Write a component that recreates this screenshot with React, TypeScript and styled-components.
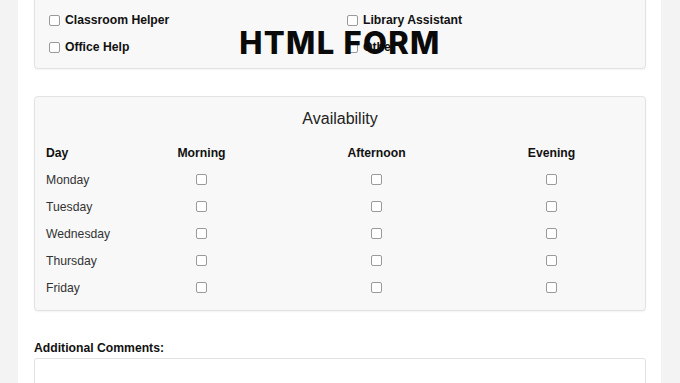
import React from "react";
import styled, { createGlobalStyle } from "styled-components";

const GlobalStyle = createGlobalStyle`
  html, body {
    margin: 0;
    padding: 0;
    background: #f3f3f3;
    overflow: hidden;
    font-family: "Liberation Sans", Arial, sans-serif;
  }
`;

const Viewport = styled.div`
  position: relative;
  width: 680px;
  height: 383px;
  overflow: hidden;
`;

const Page = styled.div`
  margin: -15px 0 0 18px;
  width: 643px;
  background: #ffffff;
  padding: 0 15px 40px 16px;
  box-sizing: border-box;
  min-height: 420px;
`;

const Panel = styled.div`
  background: #f8f8f8;
  border: 1px solid #e2e2e2;
  border-radius: 4px;
  box-shadow: 0 1px 2px rgba(0, 0, 0, 0.05);
`;

const RolePanel = styled(Panel)`
  display: grid;
  grid-template-columns: 298px 1fr;
  row-gap: 11px;
  padding: 26px 14px 13px;
`;

const RoleOption = styled.label`
  display: flex;
  align-items: center;
  gap: 5px;
  font-size: 12.2px;
  font-weight: bold;
  color: #111;
  line-height: 16px;
`;

const Box = styled.input.attrs({ type: "checkbox" })`
  appearance: none;
  margin: 0;
  width: 11px;
  height: 11px;
  border: 1px solid #9a9a9a;
  border-radius: 2px;
  background: #fff;
  flex: none;
`;

const AvailabilityPanel = styled(Panel)`
  margin-top: 27px;
  padding: 12px 11px 9px;
`;

const PanelTitle = styled.h3`
  margin: 0 0 10px;
  text-align: center;
  font-size: 16px;
  font-weight: normal;
  color: #222;
  line-height: 20px;
`;

const Grid = styled.div`
  display: grid;
  grid-template-columns: 68px repeat(3, 175px);
  grid-auto-rows: 27px;
  align-items: center;
`;

const HeadCell = styled.div<{ $center?: boolean }>`
  font-size: 12.2px;
  font-weight: bold;
  color: #111;
  text-align: ${(p) => (p.$center ? "center" : "left")};
`;

const DayCell = styled.div`
  font-size: 12.2px;
  color: #333;
`;

const BoxCell = styled.div`
  display: flex;
  justify-content: center;
`;

const CommentsLabel = styled.div`
  margin-top: 29px;
  font-size: 12.2px;
  font-weight: bold;
  color: #111;
  line-height: 16px;
`;

const CommentsArea = styled.div`
  margin-top: 2px;
  height: 60px;
  background: #fff;
  border: 1px solid #e2e2e2;
  border-radius: 3px;
`;

const Overlay = styled.div`
  position: absolute;
  top: 26px;
  left: 0;
  right: 0;
  text-align: center;
  font-family: Inter, "Open Sans", sans-serif;
  font-weight: 800;
  font-size: 31px;
  letter-spacing: 1.3px;
  color: #0a0a0a;
  line-height: 34px;
  pointer-events: none;
`;

const days = ["Monday", "Tuesday", "Wednesday", "Thursday", "Friday"];
const slots = ["Morning", "Afternoon", "Evening"];

export default function App() {
  return (
    <Viewport>
      <GlobalStyle />
      <Page>
        <RolePanel>
          <RoleOption><Box />Classroom Helper</RoleOption>
          <RoleOption><Box />Library Assistant</RoleOption>
          <RoleOption><Box />Office Help</RoleOption>
          <RoleOption><Box />Other</RoleOption>
        </RolePanel>

        <AvailabilityPanel>
          <PanelTitle>Availability</PanelTitle>
          <Grid>
            <HeadCell>Day</HeadCell>
            {slots.map((s) => (
              <HeadCell key={s} $center>{s}</HeadCell>
            ))}
            {days.map((d) => (
              <React.Fragment key={d}>
                <DayCell>{d}</DayCell>
                {slots.map((s) => (
                  <BoxCell key={s}><Box /></BoxCell>
                ))}
              </React.Fragment>
            ))}
          </Grid>
        </AvailabilityPanel>

        <CommentsLabel>Additional Comments:</CommentsLabel>
        <CommentsArea />
      </Page>
      <Overlay>HTML FORM</Overlay>
    </Viewport>
  );
}
